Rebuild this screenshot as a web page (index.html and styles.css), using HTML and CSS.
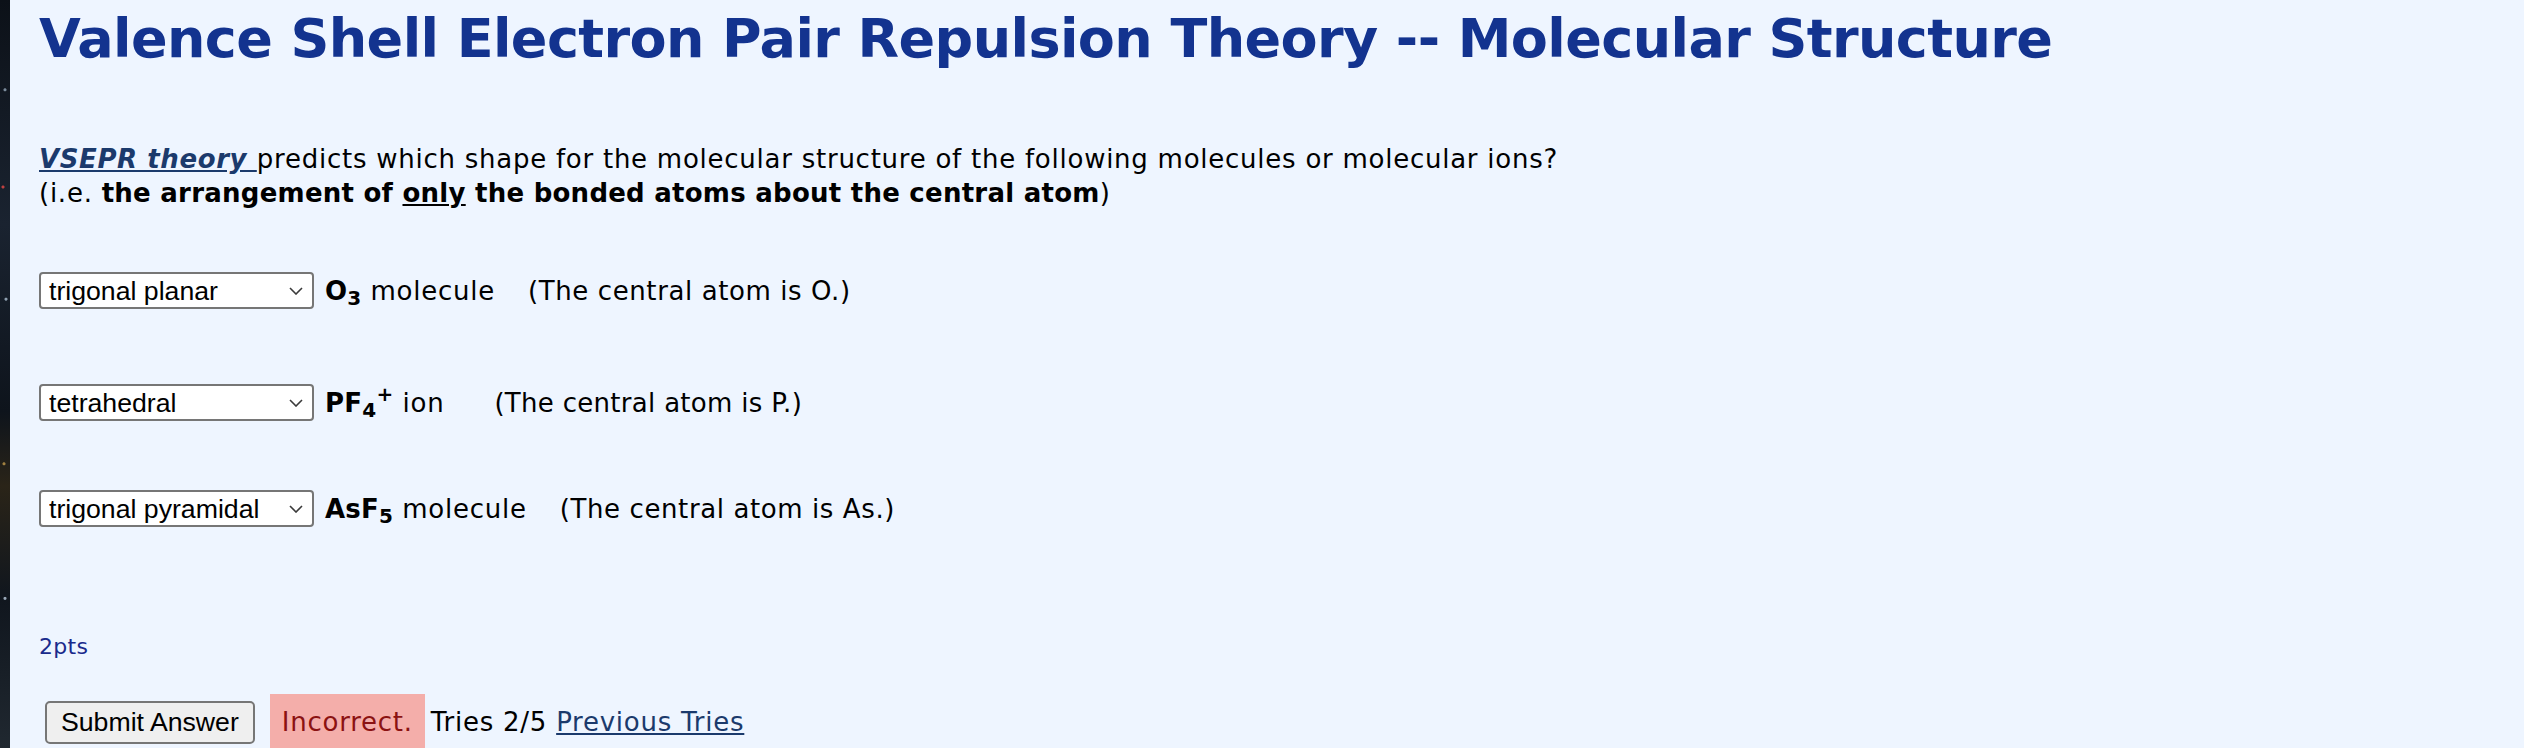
FILE: index.html
```html
<!DOCTYPE html>
<html lang="en">
<head>
<meta charset="utf-8">
<title>VSEPR Molecular Structure</title>
<link rel="stylesheet" href="styles.css">
</head>
<body>
<div class="strip"></div>
<main class="page">
  <h1 class="title">Valence Shell Electron Pair Repulsion Theory -- Molecular Structure</h1>

  <p class="question"><a class="ref" href="#"><em>VSEPR theory </em></a>predicts which shape for the molecular structure of the following molecules or molecular ions?<br>(i.e. <b>the arrangement of <u>only</u> the bonded atoms about the central atom</b>)</p>

  <div class="row row-1">
    <div class="pick">
      <select class="pick-input"><option>trigonal planar</option></select>
      <svg class="chev" width="14" height="8" viewBox="0 0 14 8"><path d="M1 1 L7 7 L13 1" fill="none" stroke="#3a3a3a" stroke-width="1.6"/></svg>
    </div>
    <span class="formula"><b>O<sub>3</sub></b> molecule</span>
    <span class="note">(The central atom is O.)</span>
  </div>

  <div class="row row-2">
    <div class="pick">
      <select class="pick-input"><option>tetrahedral</option></select>
      <svg class="chev" width="14" height="8" viewBox="0 0 14 8"><path d="M1 1 L7 7 L13 1" fill="none" stroke="#3a3a3a" stroke-width="1.6"/></svg>
    </div>
    <span class="formula"><b>PF<sub>4</sub><sup>+</sup></b> ion</span>
    <span class="note">(The central atom is P.)</span>
  </div>

  <div class="row row-3">
    <div class="pick">
      <select class="pick-input"><option>trigonal pyramidal</option></select>
      <svg class="chev" width="14" height="8" viewBox="0 0 14 8"><path d="M1 1 L7 7 L13 1" fill="none" stroke="#3a3a3a" stroke-width="1.6"/></svg>
    </div>
    <span class="formula"><b>AsF<sub>5</sub></b> molecule</span>
    <span class="note">(The central atom is As.)</span>
  </div>

  <div class="pts">2pts</div>

  <div class="actions">
    <button class="submit" type="button">Submit Answer</button>
    <span class="verdict">Incorrect.</span>
    <span class="tries">Tries 2/5 <a class="prev" href="#">Previous Tries</a></span>
  </div>
</main>
</body>
</html>
```

FILE: styles.css
```css
html, body {
  margin: 0;
  height: 100%;
}
body {
  display: flex;
  background: #eef5ff;
  font-family: "DejaVu Sans", Verdana, sans-serif;
  font-size: 26px;
  letter-spacing: 0.75px;
  color: #000;
  overflow: hidden;
}
b {
  letter-spacing: 0.25px;
}
.strip {
  flex: 0 0 10px;
  background:
    radial-gradient(circle at 50% 12%, #7a8a9a 0 1px, transparent 2px),
    radial-gradient(circle at 30% 25%, #c04040 0 1px, transparent 2px),
    radial-gradient(circle at 60% 40%, #8fa0b0 0 1px, transparent 2px),
    radial-gradient(circle at 40% 62%, #a08040 0 1px, transparent 2px),
    radial-gradient(circle at 50% 80%, #9aa8b8 0 1px, transparent 2px),
    linear-gradient(180deg, #0c1118 0%, #1a2330 30%, #0e141c 55%, #2a2418 65%, #10161e 80%, #202830 100%);
}
.page {
  flex: 1;
  padding-left: 29px;
}
.title {
  margin: 5px 0 0;
  font-size: 54px;
  line-height: 68px;
  letter-spacing: -0.6px;
  font-weight: bold;
  color: #13338f;
  white-space: nowrap;
}
.question {
  margin: 69px 0 0;
  line-height: 34px;
}
.ref {
  color: #1b3a6c;
  font-weight: bold;
  letter-spacing: 0.6px;
  text-decoration: underline;
}
.row {
  display: flex;
  align-items: center;
  height: 37px;
  margin-top: 62px;
  white-space: pre;
}
.row-2 {
  margin-top: 75px;
}
.row-3 {
  margin-top: 69px;
}
.pick {
  display: flex;
  align-items: center;
  box-sizing: border-box;
  width: 275px;
  height: 37px;
  border: 2px solid #767676;
  border-radius: 4px;
  background: #fff;
}
.pick-input {
  flex: 1;
  appearance: none;
  -webkit-appearance: none;
  border: 0;
  background: transparent;
  font-family: "Liberation Sans", Arial, sans-serif;
  font-size: 26.67px;
  letter-spacing: 0;
  color: #000;
  padding: 0 0 0 8px;
  margin: 0;
  height: 33px;
  outline: none;
}
.chev {
  margin-right: 9px;
}
.formula {
  margin-left: 11px;
}
.formula sub {
  font-size: 20px;
  vertical-align: -5px;
  line-height: 0;
}
.formula sup {
  font-size: 20px;
  vertical-align: 11px;
  line-height: 0;
}
.note {
  margin-left: 33px;
  letter-spacing: 0.6px;
}
.row-2 .note {
  margin-left: 50px;
  letter-spacing: 0.3px;
}
.pts {
  margin-top: 107px;
  font-size: 22px;
  line-height: 26px;
  letter-spacing: 0.3px;
  color: #1a2a8c;
}
.actions {
  display: flex;
  align-items: flex-start;
  margin-top: 34px;
  margin-left: 6px;
}
.submit {
  box-sizing: border-box;
  margin-top: 7px;
  height: 43px;
  padding: 0 14px;
  border: 2px solid #767676;
  border-radius: 5px;
  background: #efefef;
  font-family: "Liberation Sans", Arial, sans-serif;
  font-size: 26.67px;
  letter-spacing: 0;
  color: #000;
}
.verdict {
  margin-left: 15px;
  padding: 8px 12px 12px;
  line-height: 40px;
  background: #f4aeaa;
  color: #8b1212;
}
.tries {
  margin-top: 8px;
  margin-left: 6px;
  line-height: 40px;
  white-space: pre;
}
.prev {
  color: #1b3a6c;
  text-decoration: underline;
}
```
